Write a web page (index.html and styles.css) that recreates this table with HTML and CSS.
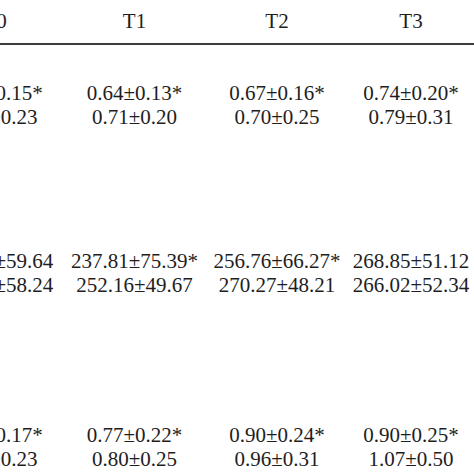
FILE: index.html
```html
<!DOCTYPE html>
<html>
<head>
<meta charset="utf-8">
<link rel="stylesheet" href="styles.css">
</head>
<body>
<div class="frame">
<table class="data">
  <colgroup>
    <col class="c0"><col class="c1"><col class="c2"><col class="c3">
  </colgroup>
  <thead>
    <tr><th>T0</th><th>T1</th><th>T2</th><th>T3</th></tr>
  </thead>
  <tbody>
    <tr class="r1">
      <td><div>0.62±0.15*</div><div>0.70±0.23</div></td>
      <td><div>0.64±0.13*</div><div>0.71±0.20</div></td>
      <td><div>0.67±0.16*</div><div>0.70±0.25</div></td>
      <td><div>0.74±0.20*</div><div>0.79±0.31</div></td>
    </tr>
    <tr class="r2">
      <td><div>231.45±59.64</div><div>248.37±58.24</div></td>
      <td><div>237.81±75.39*</div><div>252.16±49.67</div></td>
      <td><div>256.76±66.27*</div><div>270.27±48.21</div></td>
      <td><div>268.85±51.12</div><div>266.02±52.34</div></td>
    </tr>
    <tr class="r3">
      <td><div>0.71±0.17*</div><div>0.78±0.23</div></td>
      <td><div>0.77±0.22*</div><div>0.80±0.25</div></td>
      <td><div>0.90±0.24*</div><div>0.96±0.31</div></td>
      <td><div>0.90±0.25*</div><div>1.07±0.50</div></td>
    </tr>
  </tbody>
</table>
</div>
</body>
</html>
```

FILE: styles.css
```css
html, body {
  margin: 0;
  padding: 0;
  background: #ffffff;
}
body {
  width: 474px;
  height: 474px;
  overflow: hidden;
  font-family: "Liberation Serif", "Times New Roman", serif;
  color: #1e1e1e;
}
.frame {
  width: 474px;
  height: 474px;
  overflow: hidden;
}
.data {
  border-collapse: collapse;
  table-layout: fixed;
  margin-left: -74px;
  width: 552px;
  font-size: 21px;
  line-height: 24px;
}
.c0 { width: 138px; }
.c1 { width: 141px; }
.c2 { width: 144px; }
.c3 { width: 129px; }
.data th {
  font-weight: normal;
  text-align: center;
  padding: 9px 0 10px;
  border-bottom: 2px solid #3c3c3c;
  white-space: nowrap;
}
.data td {
  text-align: center;
  padding: 0;
  white-space: nowrap;
  vertical-align: top;
}
.r1 td { padding-top: 36px; }
.r2 td { padding-top: 120px; }
.r3 td { padding-top: 126px; }
.r3 td:last-child, .r2 td:last-child, .r1 td:last-child, thead th:last-child {
  padding-right: 5px;
}
```
